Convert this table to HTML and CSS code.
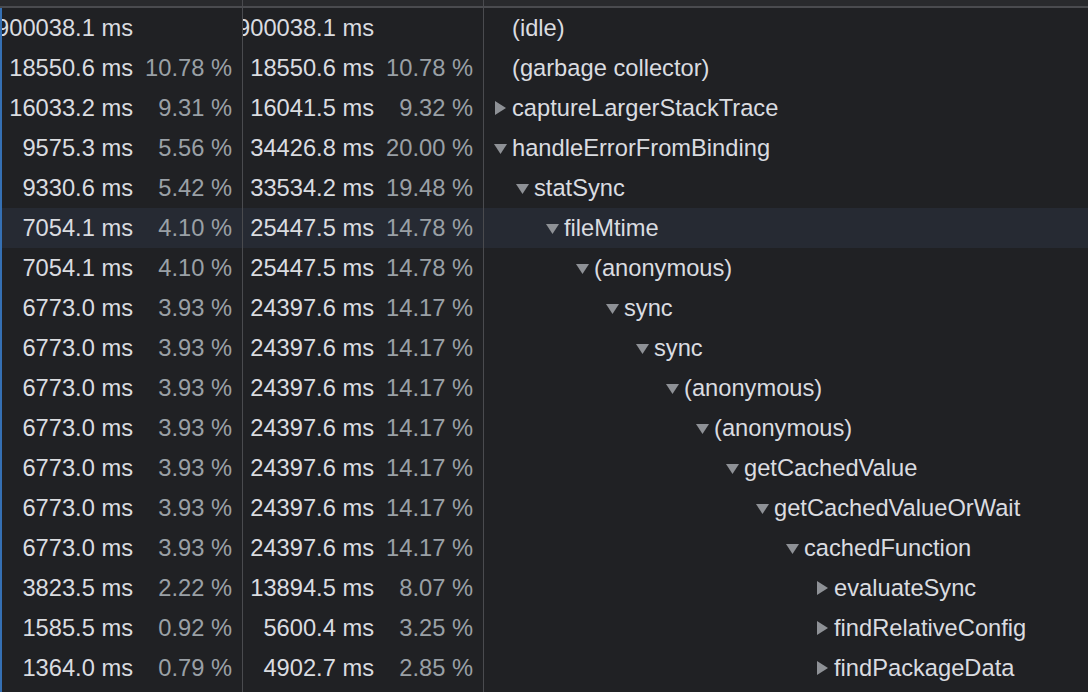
FILE: index.html
```html
<!DOCTYPE html>
<html>
<head>
<meta charset="utf-8">
<link rel="stylesheet" href="styles.css">
</head>
<body>
<div class="grid">
  <div class="header">
    <div class="hcell c1"></div>
    <div class="hcell c2"></div>
    <div class="hcell c3"></div>
  </div>
  <div class="body">
    <div class="row">
      <div class="num c1"><span class="val">900038.1 ms</span><span class="pct"></span></div>
      <div class="num c2"><span class="val">900038.1 ms</span><span class="pct"></span></div>
      <div class="name c3 d0"><span class="tog"></span><span class="fn">(idle)</span></div>
    </div>
    <div class="row">
      <div class="num c1"><span class="val">18550.6 ms</span><span class="pct">10.78 %</span></div>
      <div class="num c2"><span class="val">18550.6 ms</span><span class="pct">10.78 %</span></div>
      <div class="name c3 d0"><span class="tog"></span><span class="fn">(garbage collector)</span></div>
    </div>
    <div class="row">
      <div class="num c1"><span class="val">16033.2 ms</span><span class="pct">9.31 %</span></div>
      <div class="num c2"><span class="val">16041.5 ms</span><span class="pct">9.32 %</span></div>
      <div class="name c3 d0"><span class="tog"><svg class="right" width="11" height="14" viewBox="0 0 11 14"><polygon points="0,0 11,7 0,14"/></svg></span><span class="fn">captureLargerStackTrace</span></div>
    </div>
    <div class="row">
      <div class="num c1"><span class="val">9575.3 ms</span><span class="pct">5.56 %</span></div>
      <div class="num c2"><span class="val">34426.8 ms</span><span class="pct">20.00 %</span></div>
      <div class="name c3 d0"><span class="tog"><svg class="down" width="13" height="10" viewBox="0 0 13 10"><polygon points="0,0 13,0 6.5,10"/></svg></span><span class="fn">handleErrorFromBinding</span></div>
    </div>
    <div class="row">
      <div class="num c1"><span class="val">9330.6 ms</span><span class="pct">5.42 %</span></div>
      <div class="num c2"><span class="val">33534.2 ms</span><span class="pct">19.48 %</span></div>
      <div class="name c3 d1"><span class="tog"><svg class="down" width="13" height="10" viewBox="0 0 13 10"><polygon points="0,0 13,0 6.5,10"/></svg></span><span class="fn">statSync</span></div>
    </div>
    <div class="row selected">
      <div class="num c1"><span class="val">7054.1 ms</span><span class="pct">4.10 %</span></div>
      <div class="num c2"><span class="val">25447.5 ms</span><span class="pct">14.78 %</span></div>
      <div class="name c3 d2"><span class="tog"><svg class="down" width="13" height="10" viewBox="0 0 13 10"><polygon points="0,0 13,0 6.5,10"/></svg></span><span class="fn">fileMtime</span></div>
    </div>
    <div class="row">
      <div class="num c1"><span class="val">7054.1 ms</span><span class="pct">4.10 %</span></div>
      <div class="num c2"><span class="val">25447.5 ms</span><span class="pct">14.78 %</span></div>
      <div class="name c3 d3"><span class="tog"><svg class="down" width="13" height="10" viewBox="0 0 13 10"><polygon points="0,0 13,0 6.5,10"/></svg></span><span class="fn">(anonymous)</span></div>
    </div>
    <div class="row">
      <div class="num c1"><span class="val">6773.0 ms</span><span class="pct">3.93 %</span></div>
      <div class="num c2"><span class="val">24397.6 ms</span><span class="pct">14.17 %</span></div>
      <div class="name c3 d4"><span class="tog"><svg class="down" width="13" height="10" viewBox="0 0 13 10"><polygon points="0,0 13,0 6.5,10"/></svg></span><span class="fn">sync</span></div>
    </div>
    <div class="row">
      <div class="num c1"><span class="val">6773.0 ms</span><span class="pct">3.93 %</span></div>
      <div class="num c2"><span class="val">24397.6 ms</span><span class="pct">14.17 %</span></div>
      <div class="name c3 d5"><span class="tog"><svg class="down" width="13" height="10" viewBox="0 0 13 10"><polygon points="0,0 13,0 6.5,10"/></svg></span><span class="fn">sync</span></div>
    </div>
    <div class="row">
      <div class="num c1"><span class="val">6773.0 ms</span><span class="pct">3.93 %</span></div>
      <div class="num c2"><span class="val">24397.6 ms</span><span class="pct">14.17 %</span></div>
      <div class="name c3 d6"><span class="tog"><svg class="down" width="13" height="10" viewBox="0 0 13 10"><polygon points="0,0 13,0 6.5,10"/></svg></span><span class="fn">(anonymous)</span></div>
    </div>
    <div class="row">
      <div class="num c1"><span class="val">6773.0 ms</span><span class="pct">3.93 %</span></div>
      <div class="num c2"><span class="val">24397.6 ms</span><span class="pct">14.17 %</span></div>
      <div class="name c3 d7"><span class="tog"><svg class="down" width="13" height="10" viewBox="0 0 13 10"><polygon points="0,0 13,0 6.5,10"/></svg></span><span class="fn">(anonymous)</span></div>
    </div>
    <div class="row">
      <div class="num c1"><span class="val">6773.0 ms</span><span class="pct">3.93 %</span></div>
      <div class="num c2"><span class="val">24397.6 ms</span><span class="pct">14.17 %</span></div>
      <div class="name c3 d8"><span class="tog"><svg class="down" width="13" height="10" viewBox="0 0 13 10"><polygon points="0,0 13,0 6.5,10"/></svg></span><span class="fn">getCachedValue</span></div>
    </div>
    <div class="row">
      <div class="num c1"><span class="val">6773.0 ms</span><span class="pct">3.93 %</span></div>
      <div class="num c2"><span class="val">24397.6 ms</span><span class="pct">14.17 %</span></div>
      <div class="name c3 d9"><span class="tog"><svg class="down" width="13" height="10" viewBox="0 0 13 10"><polygon points="0,0 13,0 6.5,10"/></svg></span><span class="fn">getCachedValueOrWait</span></div>
    </div>
    <div class="row">
      <div class="num c1"><span class="val">6773.0 ms</span><span class="pct">3.93 %</span></div>
      <div class="num c2"><span class="val">24397.6 ms</span><span class="pct">14.17 %</span></div>
      <div class="name c3 d10"><span class="tog"><svg class="down" width="13" height="10" viewBox="0 0 13 10"><polygon points="0,0 13,0 6.5,10"/></svg></span><span class="fn">cachedFunction</span></div>
    </div>
    <div class="row">
      <div class="num c1"><span class="val">3823.5 ms</span><span class="pct">2.22 %</span></div>
      <div class="num c2"><span class="val">13894.5 ms</span><span class="pct">8.07 %</span></div>
      <div class="name c3 d11"><span class="tog"><svg class="right" width="11" height="14" viewBox="0 0 11 14"><polygon points="0,0 11,7 0,14"/></svg></span><span class="fn">evaluateSync</span></div>
    </div>
    <div class="row">
      <div class="num c1"><span class="val">1585.5 ms</span><span class="pct">0.92 %</span></div>
      <div class="num c2"><span class="val">5600.4 ms</span><span class="pct">3.25 %</span></div>
      <div class="name c3 d11"><span class="tog"><svg class="right" width="11" height="14" viewBox="0 0 11 14"><polygon points="0,0 11,7 0,14"/></svg></span><span class="fn">findRelativeConfig</span></div>
    </div>
    <div class="row">
      <div class="num c1"><span class="val">1364.0 ms</span><span class="pct">0.79 %</span></div>
      <div class="num c2"><span class="val">4902.7 ms</span><span class="pct">2.85 %</span></div>
      <div class="name c3 d11"><span class="tog"><svg class="right" width="11" height="14" viewBox="0 0 11 14"><polygon points="0,0 11,7 0,14"/></svg></span><span class="fn">findPackageData</span></div>
    </div>
    <div class="row filler">
      <div class="num c1"></div>
      <div class="num c2"></div>
      <div class="name c3"></div>
    </div>
  </div>
</div>
</body>
</html>
```

FILE: styles.css
```css
html, body {
  margin: 0;
  padding: 0;
  background: #202124;
  overflow: hidden;
}

.grid {
  width: 1088px;
  height: 692px;
  display: flex;
  flex-direction: column;
  font-family: "Liberation Sans", Arial, sans-serif;
  font-size: 23.7px;
  color: #dadce0;
  overflow: hidden;
}

.header {
  display: flex;
  height: 6px;
  background: #292a2d;
  border-bottom: 2px solid #4a4b4f;
  flex-shrink: 0;
}

.hcell {
  height: 100%;
}

.header .c1 {
  width: 242px;
}

.c1 {
  border-right: 1px solid #4a4b4f;
  flex-shrink: 0;
  box-sizing: border-box;
}

.c2 {
  width: 241px;
  border-right: 1px solid #4a4b4f;
  flex-shrink: 0;
  box-sizing: border-box;
}

.header .c1 {
  width: 243px;
}

.c3 {
  flex: 1;
}

.body {
  flex: 1;
  display: flex;
  flex-direction: column;
  border-left: 2px solid #3570b4;
}

.row {
  display: flex;
  height: 40px;
  line-height: 40px;
  flex-shrink: 0;
}

.row.filler {
  flex: 1;
}

.row.selected {
  background: #262a33;
}

.num {
  display: flex;
  justify-content: flex-end;
  overflow: hidden;
  white-space: nowrap;
  padding-right: 10px;
}

.body .c1 {
  width: 241px;
}

.val {
  flex-shrink: 0;
}

.pct {
  flex-shrink: 0;
  width: 99px;
  text-align: right;
  color: #9aa0a6;
}

.name {
  display: flex;
  align-items: center;
  white-space: nowrap;
  overflow: hidden;
}

.tog {
  width: 17px;
  height: 40px;
  flex-shrink: 0;
  display: flex;
  align-items: center;
}

.tog svg {
  fill: #8e9196;
  display: block;
}

.tog .down {
  margin-left: -1px;
  margin-top: 1px;
}

.fn {
  line-height: 40px;
}

.d0 { padding-left: 11px; }
.d1 { padding-left: 33px; }
.d2 { padding-left: 63px; }
.d3 { padding-left: 93px; }
.d4 { padding-left: 123px; }
.d5 { padding-left: 153px; }
.d6 { padding-left: 183px; }
.d7 { padding-left: 213px; }
.d8 { padding-left: 243px; }
.d9 { padding-left: 273px; }
.d10 { padding-left: 303px; }
.d11 { padding-left: 333px; }
```
